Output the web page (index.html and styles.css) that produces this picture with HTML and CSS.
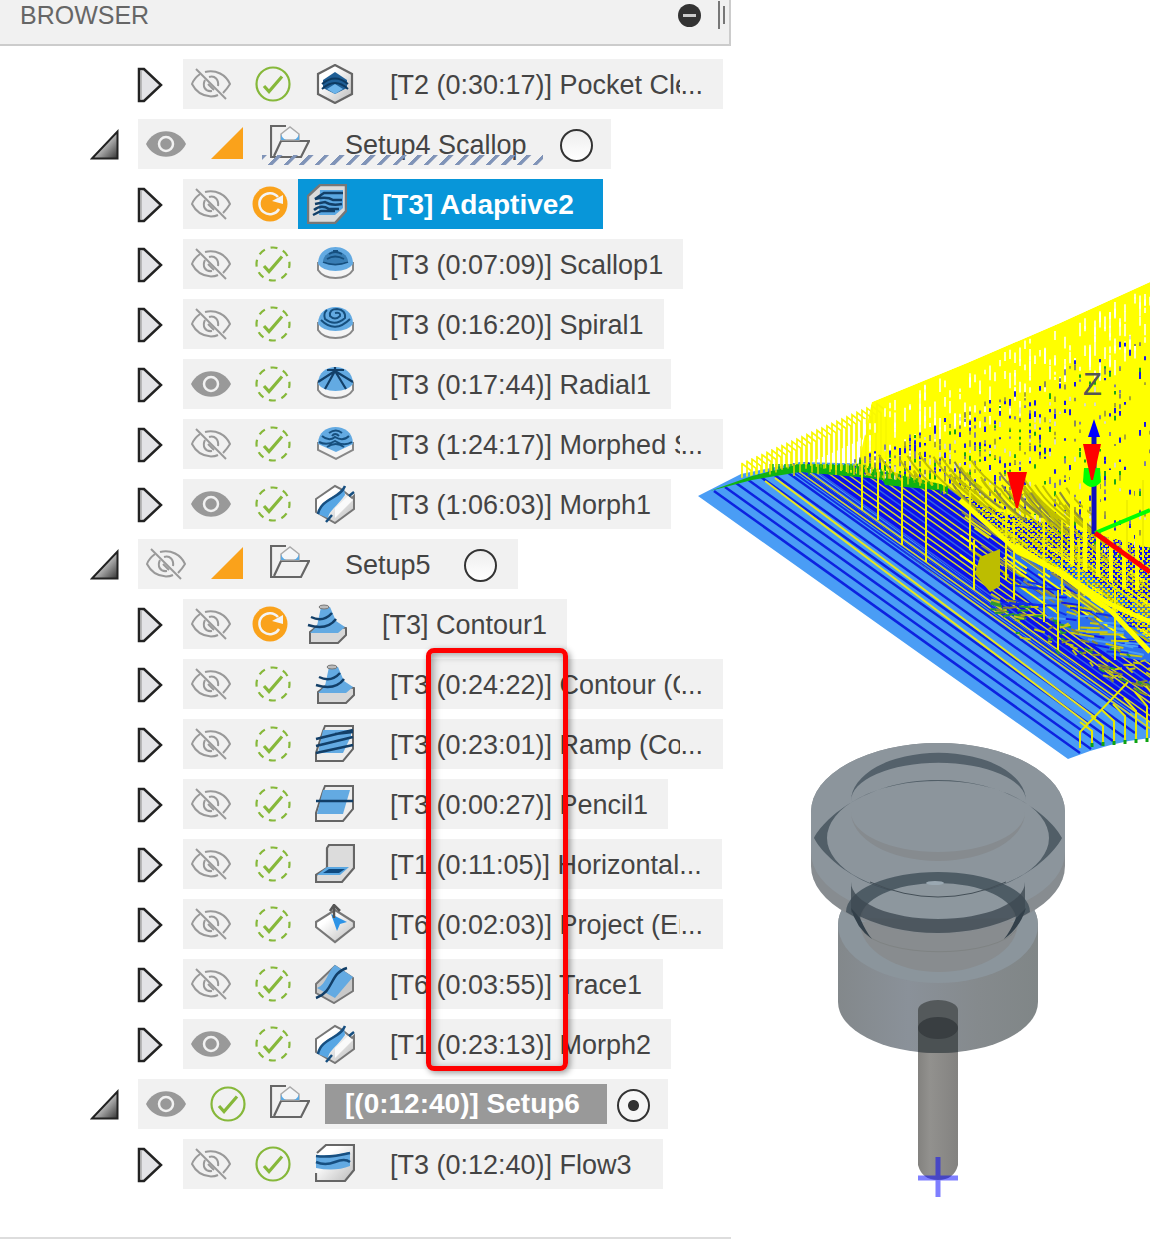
FILE: index.html
```html
<!DOCTYPE html>
<html lang="en">

<head>
    <meta charset="UTF-8">
    <meta name="viewport" content="width=device-width, initial-scale=1.0">
    <title>CAM Browser</title>
    <link rel="stylesheet" href="styles.css">
</head>

<body>

<!-- Icon set -->
<svg class="defs" width="0" height="0" aria-hidden="true">
    <defs>
        <linearGradient id="openFill" x1="0" y1="0" x2="1" y2="1">
            <stop offset="0.3" stop-color="#eee"/>
            <stop offset="1" stop-color="#333"/>
        </linearGradient>
        <linearGradient id="metal" x1="0" y1="0" x2="1" y2="1">
            <stop offset="0.3" stop-color="#fff"/>
            <stop offset="1" stop-color="#bbb"/>
        </linearGradient>
    </defs>
    <symbol id="closed" viewBox="0 0 30 40">
        <path d="M4 4H9L26 20L9 36H4Z" fill="#e3e3e6" stroke="#222" stroke-width="2.5"/>
        <path d="M6 6V34" stroke="#aaa" stroke-width="1.5"/>
    </symbol>
    <symbol id="open" viewBox="0 0 30 40">
        <path d="M2 33.500L27.500 6.500V33.500Z" fill="url(#openFill)" stroke="#222" stroke-width="2"/>
    </symbol>
    <symbol id="eye" viewBox="0 0 40 40">
        <path d="M0 20C8 3 32 3 40 20C32 37 8 37 0 20Z" fill="#999"/>
        <circle cx="20" cy="20" r="7" fill="none" stroke="#f1f1f1" stroke-width="2.500"/>
    </symbol>
    <symbol id="eye-off" viewBox="0 0 40 40">
        <g fill="none" stroke="#999" stroke-width="2">
            <path d="M9 10C5 13 2 17 1 20C4 26 10 32 20 32.500Q24 32.500 27 31"/>
            <path d="M14 8C25 5 35 11 39 20Q36 25 32 29"/>
            <path d="M14 16C11 22 14 28 21 27M18 13C24 11 28 16 27 22M17 20L23 26"/>
            <path d="M5 5L35 35"/>
        </g>
    </symbol>
    <symbol id="done" viewBox="0 0 36 36">
        <circle cx="18" cy="18" r="16.500" fill="none" stroke="#86b83a" stroke-width="2.200"/>
        <path d="M9 20L14 25.500L27 10.500" fill="none" stroke="#86b83a" stroke-width="3.200"/>
    </symbol>
    <symbol id="linked" viewBox="0 0 36 36">
        <circle cx="18" cy="18" r="16.500" fill="none" stroke="#86b83a" stroke-width="2.200" stroke-dasharray="7 5.960" stroke-dashoffset="3"/>
        <path d="M9 20L14 25.500L27 10.500" fill="none" stroke="#86b83a" stroke-width="3.200"/>
    </symbol>
    <symbol id="redo" viewBox="0 0 36 36">
        <circle cx="18" cy="18" r="17.500" fill="#faa21b"/>
        <path d="M27 23A10.500 10.500 0 1 1 26 11" fill="none" stroke="#f4f4f4" stroke-width="2.500"/>
        <path d="M20 15L31 9V18Z" fill="#f4f4f4"/>
    </symbol>
    <symbol id="warn" viewBox="0 0 36 36">
        <path d="M1 33L33 1V33Z" fill="#faa21b"/>
    </symbol>
    <symbol id="folder" viewBox="0 0 40 40">
        <path d="M16 2H1V33H31L39 17H11L4 32" fill="none" stroke="#666" stroke-width="2.200"/>
        <path d="M11 16V10L20 3L29 10V16Z" fill="#f4f6f8" stroke="#aaa" stroke-width="1.500"/>
        <path d="M11 10Q12 14 16 16H11ZM29 10Q28 14 24 16H29Z" fill="#5aa9e3"/>
    </symbol>
    <symbol id="pocket" viewBox="0 0 40 40">
        <path d="M20 1L37 10V30L20 39L3 30V10Z" fill="url(#metal)" stroke="#666" stroke-width="2.200"/>
        <path d="M8 16L20 8L32 16V24L20 30L8 24Z" fill="#1f5f96"/>
        <path d="M12 25L20 20L28 25L20 30Z" fill="#6cb4ea"/>
        <path d="M7 20Q20 9 33 20M7 25Q20 13 33 25" fill="none" stroke="#0d3a61" stroke-width="2"/>
    </symbol>
    <symbol id="adaptive" viewBox="0 0 40 40">
        <path d="M13 1H39V27L28 39H1V12Z" fill="#dcdcdc" stroke="#777" stroke-width="2.500"/>
        <path d="M13 6H36V24L28 31H12Z" fill="#5aa7e2"/>
        <path d="M36 9H17L8 15Q20 12 26 16H35M8 20L18 18Q24 22 35 20M7 26Q14 20 22 25H32M6 31L14 27H28" fill="none" stroke="#123f68" stroke-width="2.500"/>
    </symbol>
    <symbol id="dome" viewBox="0 0 40 40">
        <path d="M3 19V26Q8 34 20.500 34Q33 34 38 26V19Z" fill="#f4f4f4" stroke="#888" stroke-width="2"/>
        <path d="M3 20C3 8 12 3 20.500 3S38 8 38 20Q33 27 20.500 27Q8 27 3 20Z" fill="#63aae2"/>
    </symbol>
    <symbol id="scallop" viewBox="0 0 40 40">
        <use href="#dome"/>
        <path d="M8 17C10 4 31 4 33 17Q20 22 8 17Z" fill="#397eb5"/>
        <path d="M8 18Q20 23 33 18M12 15Q20 10 29 15M14 10Q20 6 27 10M18 7H23" fill="none" stroke="#164f7e" stroke-width="1.800"/>
    </symbol>
    <symbol id="spiral" viewBox="0 0 40 40">
        <use href="#dome"/>
        <path d="M20 9Q26 8 25 12Q20 17 15 12Q14 5 22 5Q31 6 30 14Q20 23 10 15Q8 9 12 6M6 16Q20 30 35 15" fill="none" stroke="#164f7e" stroke-width="2"/>
    </symbol>
    <symbol id="radial" viewBox="0 0 40 40">
        <use href="#dome"/>
        <path d="M20 7L3 18M20 7L10 25M20 7L31 25M20 7L38 18M12 6H29M20 3V8" fill="none" stroke="#123f68" stroke-width="2.200"/>
    </symbol>
    <symbol id="morphed" viewBox="0 0 40 40">
        <path d="M3 19V26L21 35L38 26V19Z" fill="#f4f4f4" stroke="#888" stroke-width="2"/>
        <path d="M3 20C3 8 12 3 20.500 3S38 8 38 20L21 28Z" fill="#63aae2"/>
        <path d="M4 18Q12 22 20 17Q29 23 37 18M7 12Q14 18 20 13Q28 18 34 12M14 9Q21 4 27 9M17 12Q20 8 24 12M12 23Q21 17 29 23" fill="none" stroke="#164f7e" stroke-width="2"/>
    </symbol>
    <symbol id="morph" viewBox="0 0 40 40">
        <path d="M1 15L20 2L26 5L37 14L39 12V25L20 39L1 28Z" fill="url(#metal)" stroke="#777" stroke-width="2"/>
        <path d="M29 4C23 13 4 15 3 30L13 34C14 27 20 24 27 15L30 11Z" fill="#57a6e4"/>
        <path d="M20 24L33 12L38 16L20 34Z" fill="#fafafa"/>
        <path d="M30 2C25 15 6 14 3 30M11 38L17 31M39 8L34 12" fill="none" stroke="#174f80" stroke-width="2.500"/>
    </symbol>
    <symbol id="contour" viewBox="0 0 40 40">
        <path d="M3 28L13 20L39 24V31L31 39H3Z" fill="#d8d8d8" stroke="#666" stroke-width="2"/>
        <path d="M3 29L10 22L14 3H23L29 17L38 23L31 29Z" fill="#63aae2"/>
        <ellipse cx="17" cy="3" rx="5" ry="2" fill="#bbb" stroke="#777"/>
        <path d="M4 13Q16 19 25 9M1 21Q20 27 29 15" fill="none" stroke="#123f68" stroke-width="2.500"/>
    </symbol>
    <symbol id="ramp" viewBox="0 0 40 40">
        <path d="M10 2H38V25L28 37H1V29L8 7Z" fill="#ededed" stroke="#666" stroke-width="2"/>
        <path d="M8 6H36V12L28 29H3Z" fill="#63aae2"/>
        <path d="M1 15L38 6M1 22L38 13M1 29L38 21M20 10L38 8" fill="none" stroke="#123f68" stroke-width="2.500"/>
    </symbol>
    <symbol id="pencil" viewBox="0 0 40 40">
        <path d="M10 2H38V25L28 37H1V29L8 7Z" fill="#ededed" stroke="#666" stroke-width="2"/>
        <path d="M8 6H35L28 30H2Z" fill="#63aae2"/>
        <path d="M1 17H38" stroke="#123f68" stroke-width="2.500"/>
    </symbol>
    <symbol id="horizontal" viewBox="0 0 40 40">
        <path d="M14 1H39V24L27 38H1V31L12 24V4Z" fill="#dcdcdc" stroke="#666" stroke-width="2.200"/>
        <path d="M12 23H34L25 31H2Z" fill="#5aa7e2"/>
        <path d="M14 25H30L24 29H8Z" fill="#0f4a80"/>
    </symbol>
    <symbol id="project" viewBox="0 0 40 40">
        <path d="M20 6L39 18V23L20 38L1 23V18Z" fill="url(#metal)" stroke="#777" stroke-width="2.200"/>
        <path d="M16 10L32 18L25 20L22 27Z" fill="#2d93e6"/>
        <path d="M15 7L19 1L25 7M19 2V14" fill="none" stroke="#555" stroke-width="2.500"/>
    </symbol>
    <symbol id="trace" viewBox="0 0 40 40">
        <path d="M1 20L20 2L38 14V27L19 39L1 29Z" fill="#c9c9c9" stroke="#777" stroke-width="2"/>
        <path d="M20 1L38 13L20 34L2 24C12 20 12 8 20 1Z" fill="#63aae2"/>
        <path d="M1 34C20 27 14 9 32 4" fill="none" stroke="#123f68" stroke-width="2.500"/>
    </symbol>
    <symbol id="flow" viewBox="0 0 40 40">
        <path d="M1 29V37H30L39 26V1H11L2 9" fill="url(#metal)" stroke="#666" stroke-width="2.200"/>
        <path d="M1 11Q14 13 35 8V22Q20 28 1 24Z" fill="#63aae2"/>
        <path d="M1 12Q14 14 35 9M1 18Q10 22 20 18T35 18" fill="none" stroke="#174f80" stroke-width="2.500"/>
    </symbol>
</svg>

<div class="workspace">
    <aside class="panel">
        <header class="panel-header">
            <span class="panel-title">BROWSER</span>
            <button class="minimize" aria-label="Minimize"></button>
            <span class="grip"></span>
        </header>

        <ul class="tree">
            <li class="row">
                <button class="toggle" aria-label="Expand"><svg><use href="#closed"/></svg></button>
                <div class="bar">
                    <button class="icon" aria-label="Show"><svg><use href="#eye-off"/></svg></button>
                    <svg class="status"><use href="#done"/></svg>
                    <div class="name"><svg class="icon"><use href="#pocket"/></svg><span class="label cut">[T2 (0:30:17)] Pocket Cle</span><span>...</span></div>
                </div>
            </li>
            <li class="row setup">
                <button class="toggle" aria-label="Collapse"><svg><use href="#open"/></svg></button>
                <div class="bar hatched">
                    <button class="icon" aria-label="Hide"><svg><use href="#eye"/></svg></button>
                    <svg class="status"><use href="#warn"/></svg>
                    <svg class="icon folder"><use href="#folder"/></svg>
                    <label class="label" for="setup4">Setup4 Scallop</label>
                    <input type="radio" name="setup" id="setup4">
                </div>
            </li>
            <li class="row pending">
                <button class="toggle" aria-label="Expand"><svg><use href="#closed"/></svg></button>
                <div class="bar">
                    <button class="icon" aria-label="Show"><svg><use href="#eye-off"/></svg></button>
                    <svg class="status"><use href="#redo"/></svg>
                    <div class="name selected"><svg class="icon"><use href="#adaptive"/></svg><span class="label">[T3] Adaptive2</span></div>
                </div>
            </li>
            <li class="row">
                <button class="toggle" aria-label="Expand"><svg><use href="#closed"/></svg></button>
                <div class="bar">
                    <button class="icon" aria-label="Show"><svg><use href="#eye-off"/></svg></button>
                    <svg class="status"><use href="#linked"/></svg>
                    <div class="name"><svg class="icon"><use href="#scallop"/></svg><span class="label">[T3 (0:07:09)] Scallop1</span></div>
                </div>
            </li>
            <li class="row">
                <button class="toggle" aria-label="Expand"><svg><use href="#closed"/></svg></button>
                <div class="bar">
                    <button class="icon" aria-label="Show"><svg><use href="#eye-off"/></svg></button>
                    <svg class="status"><use href="#linked"/></svg>
                    <div class="name"><svg class="icon"><use href="#spiral"/></svg><span class="label">[T3 (0:16:20)] Spiral1</span></div>
                </div>
            </li>
            <li class="row">
                <button class="toggle" aria-label="Expand"><svg><use href="#closed"/></svg></button>
                <div class="bar">
                    <button class="icon" aria-label="Hide"><svg><use href="#eye"/></svg></button>
                    <svg class="status"><use href="#linked"/></svg>
                    <div class="name"><svg class="icon"><use href="#radial"/></svg><span class="label">[T3 (0:17:44)] Radial1</span></div>
                </div>
            </li>
            <li class="row">
                <button class="toggle" aria-label="Expand"><svg><use href="#closed"/></svg></button>
                <div class="bar">
                    <button class="icon" aria-label="Show"><svg><use href="#eye-off"/></svg></button>
                    <svg class="status"><use href="#linked"/></svg>
                    <div class="name"><svg class="icon"><use href="#morphed"/></svg><span class="label cut">[T3 (1:24:17)] Morphed S</span><span>...</span></div>
                </div>
            </li>
            <li class="row">
                <button class="toggle" aria-label="Expand"><svg><use href="#closed"/></svg></button>
                <div class="bar">
                    <button class="icon" aria-label="Hide"><svg><use href="#eye"/></svg></button>
                    <svg class="status"><use href="#linked"/></svg>
                    <div class="name"><svg class="icon"><use href="#morph"/></svg><span class="label">[T3 (1:06:03)] Morph1</span></div>
                </div>
            </li>
            <li class="row setup">
                <button class="toggle" aria-label="Collapse"><svg><use href="#open"/></svg></button>
                <div class="bar">
                    <button class="icon" aria-label="Show"><svg><use href="#eye-off"/></svg></button>
                    <svg class="status"><use href="#warn"/></svg>
                    <svg class="icon folder"><use href="#folder"/></svg>
                    <label class="label" for="setup5">Setup5</label>
                    <input type="radio" name="setup" id="setup5">
                </div>
            </li>
            <li class="row pending">
                <button class="toggle" aria-label="Expand"><svg><use href="#closed"/></svg></button>
                <div class="bar">
                    <button class="icon" aria-label="Show"><svg><use href="#eye-off"/></svg></button>
                    <svg class="status"><use href="#redo"/></svg>
                    <div class="name"><svg class="icon"><use href="#contour"/></svg><span class="label">[T3] Contour1</span></div>
                </div>
            </li>
            <li class="row">
                <button class="toggle" aria-label="Expand"><svg><use href="#closed"/></svg></button>
                <div class="bar">
                    <button class="icon" aria-label="Show"><svg><use href="#eye-off"/></svg></button>
                    <svg class="status"><use href="#linked"/></svg>
                    <div class="name"><svg class="icon"><use href="#contour"/></svg><span class="label cut">[T3 (0:24:22)] Contour (C</span><span>...</span></div>
                </div>
            </li>
            <li class="row">
                <button class="toggle" aria-label="Expand"><svg><use href="#closed"/></svg></button>
                <div class="bar">
                    <button class="icon" aria-label="Show"><svg><use href="#eye-off"/></svg></button>
                    <svg class="status"><use href="#linked"/></svg>
                    <div class="name"><svg class="icon"><use href="#ramp"/></svg><span class="label cut">[T3 (0:23:01)] Ramp (Co</span><span>...</span></div>
                </div>
            </li>
            <li class="row">
                <button class="toggle" aria-label="Expand"><svg><use href="#closed"/></svg></button>
                <div class="bar">
                    <button class="icon" aria-label="Show"><svg><use href="#eye-off"/></svg></button>
                    <svg class="status"><use href="#linked"/></svg>
                    <div class="name"><svg class="icon"><use href="#pencil"/></svg><span class="label">[T3 (0:00:27)] Pencil1</span></div>
                </div>
            </li>
            <li class="row">
                <button class="toggle" aria-label="Expand"><svg><use href="#closed"/></svg></button>
                <div class="bar">
                    <button class="icon" aria-label="Show"><svg><use href="#eye-off"/></svg></button>
                    <svg class="status"><use href="#linked"/></svg>
                    <div class="name"><svg class="icon"><use href="#horizontal"/></svg><span class="label cut">[T1 (0:11:05)] Horizontal</span><span>...</span></div>
                </div>
            </li>
            <li class="row">
                <button class="toggle" aria-label="Expand"><svg><use href="#closed"/></svg></button>
                <div class="bar">
                    <button class="icon" aria-label="Show"><svg><use href="#eye-off"/></svg></button>
                    <svg class="status"><use href="#linked"/></svg>
                    <div class="name"><svg class="icon"><use href="#project"/></svg><span class="label cut">[T6 (0:02:03)] Project (En</span><span>...</span></div>
                </div>
            </li>
            <li class="row">
                <button class="toggle" aria-label="Expand"><svg><use href="#closed"/></svg></button>
                <div class="bar">
                    <button class="icon" aria-label="Show"><svg><use href="#eye-off"/></svg></button>
                    <svg class="status"><use href="#linked"/></svg>
                    <div class="name"><svg class="icon"><use href="#trace"/></svg><span class="label">[T6 (0:03:55)] Trace1</span></div>
                </div>
            </li>
            <li class="row">
                <button class="toggle" aria-label="Expand"><svg><use href="#closed"/></svg></button>
                <div class="bar">
                    <button class="icon" aria-label="Hide"><svg><use href="#eye"/></svg></button>
                    <svg class="status"><use href="#linked"/></svg>
                    <div class="name"><svg class="icon"><use href="#morph"/></svg><span class="label">[T1 (0:23:13)] Morph2</span></div>
                </div>
            </li>
            <li class="row setup active">
                <button class="toggle" aria-label="Collapse"><svg><use href="#open"/></svg></button>
                <div class="bar">
                    <button class="icon" aria-label="Hide"><svg><use href="#eye"/></svg></button>
                    <svg class="status"><use href="#done"/></svg>
                    <svg class="icon folder"><use href="#folder"/></svg>
                    <label class="label" for="setup6">[(0:12:40)] Setup6</label>
                    <input type="radio" name="setup" id="setup6" checked>
                </div>
            </li>
            <li class="row">
                <button class="toggle" aria-label="Expand"><svg><use href="#closed"/></svg></button>
                <div class="bar">
                    <button class="icon" aria-label="Show"><svg><use href="#eye-off"/></svg></button>
                    <svg class="status"><use href="#done"/></svg>
                    <div class="name"><svg class="icon"><use href="#flow"/></svg><span class="label">[T3 (0:12:40)] Flow3</span></div>
                </div>
            </li>
        </ul>

        <!-- Marks the machining times -->
        <div class="callout"></div>
    </aside>

    <main class="viewport">
        <svg class="scene" viewBox="690 0 460 1239" preserveAspectRatio="xMinYMin meet">
            <defs>
                <linearGradient id="holder">
                    <stop offset="0" stop-color="#83888b"/>
                    <stop offset="0.35" stop-color="#8a9199"/>
                    <stop offset="0.7" stop-color="#858a8d"/>
                    <stop offset="1" stop-color="#808687"/>
                </linearGradient>
                <linearGradient id="shaft">
                    <stop offset="0" stop-color="#83827f"/>
                    <stop offset="0.3" stop-color="#92918e"/>
                    <stop offset="1" stop-color="#838280"/>
                </linearGradient>
                <pattern id="dither" width="5" height="5" patternUnits="userSpaceOnUse">
                    <path d="M0 1H3M2 4H5" stroke="#e8e800" stroke-width="2"/>
                </pattern>
                <clipPath id="bodyClip">
                    <path d="M698 496L741 474L800 462L880 464L950 484L1010 500L1150 480V738Q1110 742 1068 759Z"/>
                </clipPath>
                <clipPath id="innerClip">
                    <path d="M790 466L880 468L950 488L1010 480L1150 470V738L1118 742V712Z"/>
                </clipPath>
                <clipPath id="curtainClip">
                    <path d="M741 463L823 425L872 402L967 363L1060 323L1150 282V600L1060 560L990 535L940 486L870 476L800 464L741 478Z"/>
                </clipPath>
            </defs>

            <path d="M698 496L741 474L800 462L880 464L950 484L1010 500L1150 480V738Q1110 742 1068 759Z" fill="#4a9df5"/>
            <g clip-path="url(#bodyClip)"><g id="stripes"></g></g>
            <g clip-path="url(#innerClip)">
                <path d="M810 466L950 486L1150 470V722L1122 700L980 590Z" fill="#0a10ee"/>
                <g id="passes"></g>
                <path d="M1010 552L1060 560L1150 606V662L1110 655L1060 625L1015 590Z" fill="#2c72ee"/>
                <g id="valley"></g>
                <path d="M950 486L1150 510V640L1100 600L1010 548Z" fill="url(#dither)"/>
            </g>
            <path d="M710 491L752 476L800 464L870 466L950 486L946 491L870 478L800 472L752 480Z" fill="#0fb312"/>
            <path d="M880 474L950 486L946 491L885 485Z" fill="#0fb312"/>
            <g clip-path="url(#curtainClip)">
                <path d="M872 402L967 363L1060 323L1150 282V548L1080 530L1000 512L940 484L858 466Z" fill="#ff0"/>
                <g id="curtain"></g>
            </g>
            <path d="M980 557L1000 549V586L990 592L975 574Z" fill="#bdbd00"/>
            <g id="links"></g>

            <!-- Work coordinate system -->
            <path d="M1094 437V534" stroke="#1010c0" stroke-width="5"/>
            <path d="M1094 419L1100 437H1088Z" fill="#00f"/>
            <path d="M1084 468H1100L1101 482Q1092 492 1083 482Z" fill="#0f0"/>
            <path d="M1095 533L1150 510" stroke="#0f0" stroke-width="4"/>
            <path d="M1095 533L1150 572" stroke="#f00" stroke-width="5"/>
            <path d="M1083 444H1101L1093 480H1091ZM1007 472H1027L1018 508H1016Z" fill="#f00"/>
            <text x="1083" y="395" class="axis">Z</text>

            <!-- Tool holder -->
            <path d="M838 925A100 56 0 0 1 1038 925V1002A100 51 0 0 1 838 1002Z" fill="url(#holder)"/>
            <path d="M838 925A100 58 0 0 0 1038 925A100 56 0 0 0 838 925Z" fill="#8b959c"/>
            <path d="M860 922A79 50 0 0 0 1018 922Z" fill="#888c8f"/>
            <path d="M862 930A79 28 0 0 0 1016 930" fill="none" stroke="#7f8383"/>
            <path d="M811 812A127 69 0 0 1 1065 812V866A127 68 0 0 1 811 866Z" fill="#878c90"/>
            <path d="M811 812A127 69 0 0 1 1065 812V852A127 68 0 0 1 811 852Z" fill="#8c959c"/>
            <path d="M851 812A87 49 0 0 0 1025 812A87 40 0 0 1 851 812Z" fill="#868b8f"/>
            <path d="M851 801A87 48 0 0 1 1026 801A87 38 0 0 0 851 801Z" fill="#54616b"/>
            <path d="M814 838C822 822 862 780 938 780S1054 822 1062 838C1054 854 1014 897 938 897S822 854 814 838ZM827 838A111 57 0 0 0 1049 838A111 57 0 0 0 827 838Z" fill="#515e67" fill-rule="evenodd"/>
            <path d="M862 918A76 36 0 0 1 1014 918Q938 920 862 918Z" fill="#8d979e"/>
            <path d="M846 912A92 40 0 0 1 1030 912L1016 920A78 37 0 0 0 860 920Z" fill="#3f4d58" fill-opacity="0.8"/>
            <path d="M851 882V912Q890 933 938 933T1025 912V882A87 37 0 0 1 851 882Z" fill="#3f4a52" fill-opacity="0.8"/>
            <path d="M860 918Q866 932 872 939Q856 928 851 908ZM1016 918Q1010 932 1004 939Q1020 928 1026 908Z" fill="#33404a"/>
            <path d="M870 882Q938 912 1006 882" fill="none" stroke="#444f57"/>
            <ellipse cx="935" cy="883" rx="9" ry="2" fill="#9aa8b2"/>

            <path d="M918 1010V1165Q922 1180 938 1180T958 1165V1010Z" fill="url(#shaft)"/>
            <path d="M918 1010A20 10 0 0 1 958 1010V1052Q938 1054 918 1052Z" fill="#54595b"/>
            <path d="M918 1028H958V1052Q938 1054 918 1052Z" fill="#4b5153"/>
            <ellipse cx="938" cy="1028" rx="20" ry="11" fill="#393e41"/>
            <path d="M938 1157V1197M918 1178H958" stroke="#00f" stroke-opacity="0.5" stroke-width="5"/>
        </svg>
    </main>
</div>

<script src="script.js"></script>
</body>

</html>
```
FILE: styles.css
```css
* {
    box-sizing: border-box;
}

body {
    margin: 0;
    background-color: #fff;
    color: #444;
    font-family: "Liberation Sans", Arial, sans-serif;
    font-size: 27px;
    line-height: 30px;
}

button {
    padding: 0;
    border: 0;
    background: none;
    cursor: pointer;
}

svg {
    display: block;
}

.defs {
    position: absolute;
}

.workspace {
    display: grid;
    grid-template-columns: 731px minmax(0, 1fr);
    overflow: hidden;
}

.panel {
    position: relative;
    padding-bottom: 48px;
    border-bottom: 2px solid #ddd;
}

.panel-header {
    display: flex;
    align-items: center;
    height: 46px;
    padding: 0 4px 14px 20px;
    background-color: #f1f1f1;
    border-right: 2px solid #ccc;
    border-bottom: 2px solid #ccc;
}

.panel-title {
    flex: 1;
    font-size: 25px;
    color: #666;
}

.minimize {
    width: 23px;
    height: 23px;
    border-radius: 50%;
    background: linear-gradient(#ccc, #ccc) center / 13px 3px no-repeat #333;
}

.grip {
    width: 7px;
    height: 28px;
    margin-left: 17px;
    background:
        linear-gradient(#777, #777) left / 2px 28px no-repeat,
        linear-gradient(#777, #777) right / 2px 18px no-repeat;
}

/* Tree */
.tree {
    display: flex;
    flex-direction: column;
    gap: 10px;
    margin: 0;
    padding: 13px 8px 0 0;
    list-style: none;
}

.row {
    display: flex;
    height: 50px;
    padding-left: 135px;
}

.row.setup {
    padding-left: 90px;
}

.toggle {
    width: 48px;
    padding-top: 1px;
}

.toggle svg {
    width: 30px;
    height: 40px;
}

.bar {
    display: flex;
    align-items: center;
    position: relative;
    min-width: 480px;
    max-width: 540px;
    padding-left: 8px;
    background-color: #f1f1f1;
}

.setup .bar,
.pending .bar {
    min-width: 380px;
}

.icon,
.icon svg {
    flex: none;
    width: 40px;
    height: 40px;
}

.status {
    flex: none;
    width: 36px;
    height: 36px;
    margin-left: 24px;
}

.name {
    display: flex;
    align-items: center;
    align-self: stretch;
    min-width: 0;
    margin-left: 7px;
    padding: 0 20px 0 17px;
}

.label {
    margin-left: 35px;
    white-space: nowrap;
}

.label,
.cut + span {
    padding-top: 2px;
}

.cut {
    overflow: hidden;
}

.pending .status {
    margin-left: 21px;
}

.pending .name {
    margin-left: 10px;
    padding-left: 9px;
}

.name.selected {
    padding-right: 29px;
    background-color: #0896d9;
    color: #fff;
    font-size: 28px;
    font-weight: bold;
}

.setup .bar {
    padding-right: 18px;
}

.folder {
    margin-left: 24px;
}

/* Setup that is being edited gets a hatched underline */
.hatched::after {
    content: "";
    position: absolute;
    left: 124px;
    right: 68px;
    bottom: 4px;
    height: 10px;
    background: repeating-linear-gradient(135deg, #8094b8 0 3px, transparent 4px 11px);
}

input[type="radio"] {
    appearance: none;
    flex: none;
    width: 33px;
    height: 33px;
    margin: 2px 0 0 33px;
    border: 2px solid #333;
    border-radius: 50%;
    background: linear-gradient(#eee, #fff);
}

input[type="radio"]:checked {
    background: radial-gradient(circle, #333 5px, #f6f6f6 6px);
}

.active .label {
    margin-left: 15px;
    padding: 5px 27px 5px 20px;
    background-color: #999;
    color: #fff;
    font-size: 28px;
    font-weight: bold;
}

.active input[type="radio"] {
    margin-left: 10px;
}

.callout {
    position: absolute;
    left: 426px;
    top: 648px;
    width: 142px;
    height: 423px;
    border: 5px solid #f00;
    border-radius: 8px;
    box-shadow: 2px 2px 6px rgba(0, 0, 0, 0.4), inset 2px 2px 9px rgba(0, 0, 0, 0.4);
}

/* 3D view, reaches a little over the panel */
.viewport {
    position: relative;
    margin-left: -41px;
    pointer-events: none;
}

.scene {
    width: 100%;
}

.axis {
    font-size: 31px;
    fill: #555;
}
```
FILE: script.js
```js
const NS = 'http://www.w3.org/2000/svg';

// Fixed seed, so the toolpath looks the same on every load
let seed = 7;
function rand(min, max) {
    seed = (seed * 16807) % 2147483647;
    return min + (seed / 2147483647) * (max - min);
}

function draw(id, d, color, width) {
    const path = document.createElementNS(NS, 'path');
    path.setAttribute('d', d);
    path.setAttribute('fill', 'none');
    path.setAttribute('stroke', color);
    path.setAttribute('stroke-width', width);
    document.getElementById(id).appendChild(path);
}

// Top of the retract moves at a given x
function topEdge(x) {
    return 463 - (x - 741) * 0.443;
}

// Parallel passes along the long edge
for (let i = 0; i < 9; i++) {
    const x = 714 + i * 11;
    const y = 491 - i * 4;
    draw('stripes', `M${x} ${y}L${x + 366} ${y + 262}`, '#0d22e0', 2.5);
}
for (let i = 0; i < 12; i++) {
    const x = 790 + i * 5;
    draw('stripes', `M${x} ${470}L${x + 340} ${470 + 243}`, '#1230e8', 2);
}
draw('stripes', 'M765 481L1088 724M775 478L1096 718', '#e6e620', 2);

for (let i = 0; i < 26; i++) {
    const x = 785 + i * 9;
    draw('passes', `M${x} 468L${x + 370} 732`, i % 4 === 3 ? '#3a66d8' : '#d6d62a', 1.5);
}

// Valley in the middle of the part
for (let i = 0; i < 110; i++) {
    const x = rand(960, 1145);
    const y = rand(495, 560) + (x - 960) * 0.45;
    const len = rand(10, 40);
    draw('valley', `M${x} ${y}l${len} ${len * 0.7}`, ['#ff0', '#bcbc00', '#1018e8', '#e8e800', '#8a8a50'][i % 5], 2);
}
for (let i = 0; i < 60; i++) {
    const x = rand(1000, 1140);
    const y = rand(570, 610) + (x - 1000) * 0.4;
    draw('valley', `M${x} ${y}l${rand(8, 28)} ${rand(0, 5)}`, ['#1230e8', '#4a9df5', '#1018e8', '#c8c810'][i % 4], 2);
}
for (let i = 0; i < 90; i++) {
    const x = rand(990, 1150);
    const y = rand(592, 625) + (x - 990) * 0.45;
    draw('valley', `M${x} ${y}l${rand(3, 12)} ${rand(-3, 6)}`, ['#c8c810', '#8a8a30', '#2a9a30'][i % 3], 2);
}

// Curtain of retract moves
for (let x = 742; x < 880; x += 5) {
    const y = topEdge(x);
    draw('curtain', `M${x} ${y + 30}V${y + 1}L${x + 9} ${y + 8}V${y + 64}`, '#f8f800', 1.7);
}
for (let i = 0; i < 200; i++) {
    const x = Math.round(rand(860, 1150) / 5) * 5;
    const y = topEdge(x) + rand(3, 65);
    draw('curtain', `M${x} ${y}v${rand(3, 16)}`, '#fff', 1.5);
}
for (let i = 0; i < 700; i++) {
    const x = Math.round(rand(855, 1150) / 5) * 5;
    const low = 475 + Math.max(0, x - 940) * 0.45;
    const high = topEdge(x) + 45;
    const y = low - (low - high) * Math.pow(rand(0, 1), 1.5);
    const color = ['#1a1ae6', '#8080a0', '#a8a830', '#1a1ae6', '#8a8a60', '#dcdcc0', '#19a819'][i % 7];
    draw('curtain', `M${x} ${y}v${rand(2, 6)}`, color, 2);
}
for (let i = 0; i < 60; i++) {
    const x = rand(860, 1080);
    const y = rand(450, 485) + Math.max(0, x - 930) * 0.25;
    const len = rand(20, 50);
    draw('curtain', `M${x} ${y}q${len * 0.3} ${len * 0.5} ${len} ${len}`, i % 4 ? '#c0c000' : '#8a8a40', 2);
}
for (let x = 1072; x < 1150; x += 13) {
    draw('curtain', `M${x} 470V590`, '#ff0', 4);
}

// Short vertical link moves
for (let i = 0; i < 60; i++) {
    const x = 770 + i * 3;
    draw('links', `M${x} ${464 + Math.max(0, x - 860) * 0.25}v${rand(3, 12)}`, i % 2 ? '#0fb312' : '#d8d800', 1.5);
}
[[862, 460, 510], [878, 470, 520], [902, 478, 545], [926, 480, 562], [970, 490, 550], [974, 540, 590],
 [1006, 510, 580], [1014, 520, 600], [1044, 520, 622], [1062, 520, 595], [1058, 590, 650], [1079, 540, 630],
 [1115, 590, 660], [1127, 500, 560], [1143, 480, 560]].forEach(([x, y1, y2]) => {
    draw('links', `M${x} ${y1}V${y2}`, '#f0f000', 2);
});
draw('links', 'M960 500L1000 535L1018 552L1060 572L1110 604L1150 622', '#ff0', 5);
draw('links', 'M1015 545L1062 575L1112 612L1150 652', '#ff0', 5);

// Lead-outs at the near corner
draw('links', 'M1080 748V732L1106 705L1128 682', '#e8e800', 2);
for (let i = 0; i < 7; i++) {
    const x = 1092 + i * 11;
    draw('links', `M${x - 12} ${722 - i * 6}L${x} ${731 - i * 5}V${745 - i}`, '#e8e800', 2);
    draw('links', `M${x} ${743 - i}v4`, '#0fa312', 3);
}
```
